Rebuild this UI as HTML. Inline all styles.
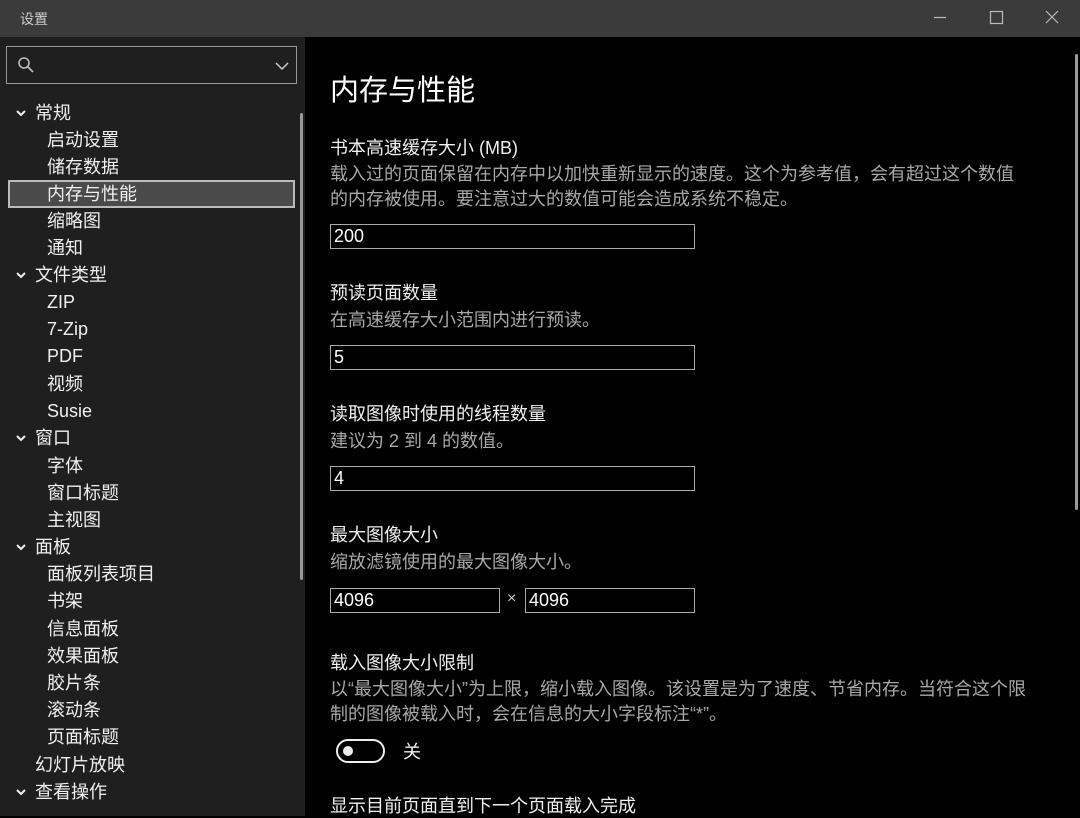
<!DOCTYPE html>
<html><head><meta charset="utf-8"><style>
*{margin:0;padding:0;box-sizing:border-box}
body{width:1080px;height:816px;overflow:hidden;background:#000;font-family:"Liberation Sans","Noto Sans CJK SC",sans-serif;color:#fff;position:relative}
.tb{position:absolute;left:0;top:0;width:1080px;height:37px;background:#3b3b3b}
.tb .t{position:absolute;left:20px;top:9px;font-size:14px;color:#ccc}
.side{position:absolute;left:0;top:37px;width:305px;height:779px;background:#1f1f1f}
.search{position:absolute;left:6px;top:46px;width:291px;height:38px;border:1px solid #999}
.it{position:absolute;font-size:18px;line-height:24px;color:#f0f0f0;white-space:nowrap}
.chev{position:absolute;left:15px;width:12px;height:12px}
.sel{position:absolute;left:8px;top:180px;width:287px;height:28px;background:#4a4a4a;border:2px solid #bbb}
.sb{position:absolute;left:300px;top:113px;width:3px;height:467px;background:#999;border-radius:2px}
.sb2{position:absolute;left:1075px;top:54px;width:3px;height:456px;background:#999;border-radius:2px}
.h1{position:absolute;left:330px;top:67px;font-size:29px;color:#fff}
.lb{position:absolute;left:330px;font-size:18px;color:#f0f0f0;white-space:nowrap}
.ds{position:absolute;left:330px;font-size:18px;color:#a8a8a8;line-height:25px;white-space:nowrap}
.in{position:absolute;height:25px;border:1px solid #aaa;font-size:18px;padding-left:3px;line-height:22px;color:#fff}
</style></head><body>
<div class="tb"><div class="t">设置</div>
<svg style="position:absolute;left:930px;top:8px" width="20" height="20"><line x1="4" y1="9.5" x2="16" y2="9.5" stroke="#bbb" stroke-width="1.2"/></svg>
<svg style="position:absolute;left:986px;top:8px" width="20" height="20"><rect x="4.5" y="3.5" width="12" height="12" fill="none" stroke="#bbb" stroke-width="1.2"/></svg>
<svg style="position:absolute;left:1042px;top:8px" width="20" height="20"><path d="M4 3L16 15M16 3L4 15" stroke="#bbb" stroke-width="1.2"/></svg>
</div>
<div class="side"></div>
<div class="search">
<svg style="position:absolute;left:10px;top:9px" width="18" height="18"><circle cx="7" cy="7" r="5" fill="none" stroke="#bbb" stroke-width="1.6"/><line x1="10.5" y1="10.5" x2="16" y2="16" stroke="#bbb" stroke-width="1.8"/></svg>
<svg style="position:absolute;left:267px;top:13px" width="16" height="12"><path d="M2 3L8 9L14 3" fill="none" stroke="#ccc" stroke-width="1.5"/></svg>
</div>
<div class="sel"></div>
<div class="sb"></div><div class="sb2"></div>
<svg class="chev" style="top:107px" viewBox="0 0 12 12"><path d="M2 4L6 8L10 4" fill="none" stroke="#eee" stroke-width="2"/></svg>
<div class="it" style="left:35px;top:101px">常规</div>
<div class="it" style="left:47px;top:128px">启动设置</div>
<div class="it" style="left:47px;top:155px">储存数据</div>
<div class="it" style="left:47px;top:182px">内存与性能</div>
<div class="it" style="left:47px;top:209px">缩略图</div>
<div class="it" style="left:47px;top:236px">通知</div>
<svg class="chev" style="top:269px" viewBox="0 0 12 12"><path d="M2 4L6 8L10 4" fill="none" stroke="#eee" stroke-width="2"/></svg>
<div class="it" style="left:35px;top:263px">文件类型</div>
<div class="it" style="left:47px;top:290px">ZIP</div>
<div class="it" style="left:47px;top:317px">7-Zip</div>
<div class="it" style="left:47px;top:344px">PDF</div>
<div class="it" style="left:47px;top:372px">视频</div>
<div class="it" style="left:47px;top:399px">Susie</div>
<svg class="chev" style="top:432px" viewBox="0 0 12 12"><path d="M2 4L6 8L10 4" fill="none" stroke="#eee" stroke-width="2"/></svg>
<div class="it" style="left:35px;top:426px">窗口</div>
<div class="it" style="left:47px;top:454px">字体</div>
<div class="it" style="left:47px;top:481px">窗口标题</div>
<div class="it" style="left:47px;top:508px">主视图</div>
<svg class="chev" style="top:541px" viewBox="0 0 12 12"><path d="M2 4L6 8L10 4" fill="none" stroke="#eee" stroke-width="2"/></svg>
<div class="it" style="left:35px;top:535px">面板</div>
<div class="it" style="left:47px;top:562px">面板列表项目</div>
<div class="it" style="left:47px;top:589px">书架</div>
<div class="it" style="left:47px;top:617px">信息面板</div>
<div class="it" style="left:47px;top:644px">效果面板</div>
<div class="it" style="left:47px;top:671px">胶片条</div>
<div class="it" style="left:47px;top:698px">滚动条</div>
<div class="it" style="left:47px;top:725px">页面标题</div>
<div class="it" style="left:35px;top:753px">幻灯片放映</div>
<svg class="chev" style="top:786px" viewBox="0 0 12 12"><path d="M2 4L6 8L10 4" fill="none" stroke="#eee" stroke-width="2"/></svg>
<div class="it" style="left:35px;top:780px">查看操作</div>
<div class="h1">内存与性能</div>
<div class="lb" style="top:134px">书本高速缓存大小 (MB)</div>
<div class="ds" style="top:162px">载入过的页面保留在内存中以加快重新显示的速度。这个为参考值，会有超过这个数值<br>的内存被使用。要注意过大的数值可能会造成系统不稳定。</div>
<div class="in" style="left:330px;top:224px;width:365px">200</div>
<div class="lb" style="top:279px">预读页面数量</div>
<div class="ds" style="top:308px">在高速缓存大小范围内进行预读。</div>
<div class="in" style="left:330px;top:345px;width:365px">5</div>
<div class="lb" style="top:400px">读取图像时使用的线程数量</div>
<div class="ds" style="top:429px">建议为 2 到 4 的数值。</div>
<div class="in" style="left:330px;top:466px;width:365px">4</div>
<div class="lb" style="top:521px">最大图像大小</div>
<div class="ds" style="top:550px">缩放滤镜使用的最大图像大小。</div>
<div class="in" style="left:330px;top:588px;width:170px">4096</div>
<div style="position:absolute;left:507px;top:590px;font-size:16px;color:#ccc">×</div>
<div class="in" style="left:525px;top:588px;width:170px">4096</div>
<div class="lb" style="top:649px">载入图像大小限制</div>
<div class="ds" style="top:677px">以“最大图像大小”为上限，缩小载入图像。该设置是为了速度、节省内存。当符合这个限<br>制的图像被载入时，会在信息的大小字段标注“*”。</div>
<div style="position:absolute;left:336px;top:739px;width:49px;height:24px;border:2px solid #eee;border-radius:12px"><div style="position:absolute;left:5px;top:5px;width:10px;height:10px;border-radius:50%;background:#eee"></div></div>
<div class="lb" style="left:403px;top:738px">关</div>
<div class="lb" style="top:792px">显示目前页面直到下一个页面载入完成</div>
</body></html>
